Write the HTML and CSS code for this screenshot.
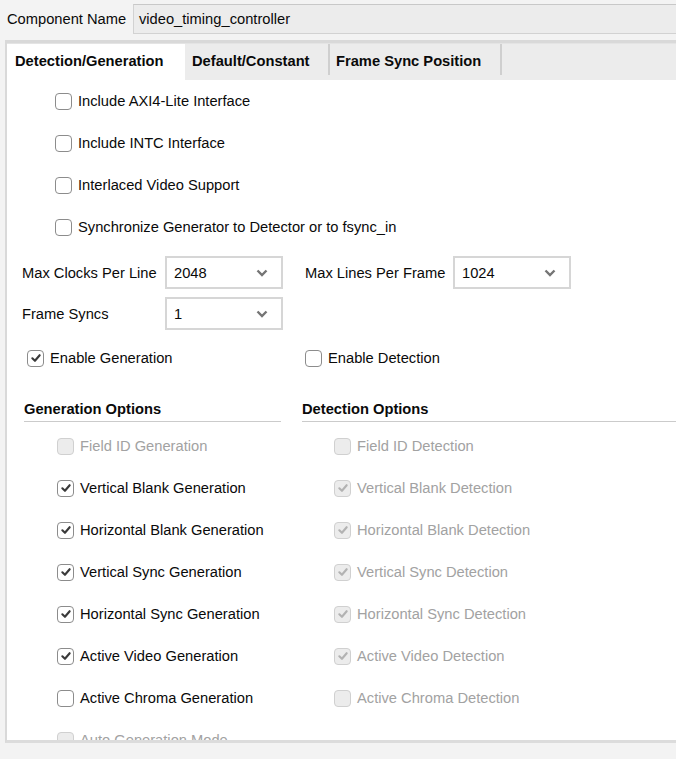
FILE: index.html
```html
<!DOCTYPE html>
<html>
<head>
<meta charset="utf-8">
<link rel="stylesheet" href="styles.css">
</head>
<body>
<div class="top">
  <span class="top-label">Component Name</span>
  <div class="name-input">video_timing_controller</div>
</div>
<div class="panel">
  <div class="tabs">
    <div class="tab tab1 active">Detection/Generation</div>
    <div class="tab tab2">Default/Constant</div>
    <div class="sep"></div>
    <div class="tab tab3">Frame Sync Position</div>
    <div class="sep"></div>
  </div>
  <div class="body">
    <div class="top-checks">
      <label class="row"><span class="cb"></span>Include AXI4-Lite Interface</label>
      <label class="row"><span class="cb"></span>Include INTC Interface</label>
      <label class="row"><span class="cb"></span>Interlaced Video Support</label>
      <label class="row"><span class="cb"></span>Synchronize Generator to Detector or to fsync_in</label>
    </div>
    <div class="selects">
      <span class="sl-label">Max Clocks Per Line</span>
      <div class="select"><span>2048</span><svg class="chev" width="12" height="8" viewBox="0 0 12 8"><polyline points="1.5,1.5 6,6 10.5,1.5"/></svg></div>
      <span class="sl-label sl-right">Max Lines Per Frame</span>
      <div class="select"><span>1024</span><svg class="chev" width="12" height="8" viewBox="0 0 12 8"><polyline points="1.5,1.5 6,6 10.5,1.5"/></svg></div>
      <span class="sl-label">Frame Syncs</span>
      <div class="select"><span>1</span><svg class="chev" width="12" height="8" viewBox="0 0 12 8"><polyline points="1.5,1.5 6,6 10.5,1.5"/></svg></div>
    </div>
    <div class="enable">
      <label class="row"><span class="cb"><svg viewBox="0 0 16 16"><polyline points="3.8,8.3 6.8,11.2 12.2,4.8"/></svg></span>Enable Generation</label>
      <label class="row"><span class="cb"></span>Enable Detection</label>
    </div>
    <div class="options">
      <div class="col col-gen">
        <div class="heading">Generation Options</div>
        <div class="opts">
          <label class="row dis"><span class="cb"></span>Field ID Generation</label>
          <label class="row"><span class="cb"><svg viewBox="0 0 16 16"><polyline points="3.8,8.3 6.8,11.2 12.2,4.8"/></svg></span>Vertical Blank Generation</label>
          <label class="row"><span class="cb"><svg viewBox="0 0 16 16"><polyline points="3.8,8.3 6.8,11.2 12.2,4.8"/></svg></span>Horizontal Blank Generation</label>
          <label class="row"><span class="cb"><svg viewBox="0 0 16 16"><polyline points="3.8,8.3 6.8,11.2 12.2,4.8"/></svg></span>Vertical Sync Generation</label>
          <label class="row"><span class="cb"><svg viewBox="0 0 16 16"><polyline points="3.8,8.3 6.8,11.2 12.2,4.8"/></svg></span>Horizontal Sync Generation</label>
          <label class="row"><span class="cb"><svg viewBox="0 0 16 16"><polyline points="3.8,8.3 6.8,11.2 12.2,4.8"/></svg></span>Active Video Generation</label>
          <label class="row"><span class="cb"></span>Active Chroma Generation</label>
          <label class="row dis"><span class="cb"></span>Auto Generation Mode</label>
        </div>
      </div>
      <div class="col col-det">
        <div class="heading">Detection Options</div>
        <div class="opts">
          <label class="row dis"><span class="cb"></span>Field ID Detection</label>
          <label class="row dis"><span class="cb"><svg viewBox="0 0 16 16"><polyline points="3.8,8.3 6.8,11.2 12.2,4.8"/></svg></span>Vertical Blank Detection</label>
          <label class="row dis"><span class="cb"><svg viewBox="0 0 16 16"><polyline points="3.8,8.3 6.8,11.2 12.2,4.8"/></svg></span>Horizontal Blank Detection</label>
          <label class="row dis"><span class="cb"><svg viewBox="0 0 16 16"><polyline points="3.8,8.3 6.8,11.2 12.2,4.8"/></svg></span>Vertical Sync Detection</label>
          <label class="row dis"><span class="cb"><svg viewBox="0 0 16 16"><polyline points="3.8,8.3 6.8,11.2 12.2,4.8"/></svg></span>Horizontal Sync Detection</label>
          <label class="row dis"><span class="cb"><svg viewBox="0 0 16 16"><polyline points="3.8,8.3 6.8,11.2 12.2,4.8"/></svg></span>Active Video Detection</label>
          <label class="row dis"><span class="cb"></span>Active Chroma Detection</label>
        </div>
      </div>
    </div>
  </div>
</div>
</body>
</html>
```
FILE: styles.css
```css
html, body {
  margin: 0;
  padding: 0;
}
body {
  width: 676px;
  height: 759px;
  overflow: hidden;
  background: #f3f3f3;
  font-family: "Liberation Sans", Arial, sans-serif;
  font-size: 14.7px;
  color: #0a0a0a;
}
.top {
  display: flex;
  align-items: center;
  height: 30px;
  padding-top: 4px;
  width: 720px;
}
.top-label {
  width: 126px;
  padding-left: 7px;
}
.name-input {
  flex: 1;
  height: 30px;
  box-sizing: border-box;
  border: 1px solid #d2d2d2;
  border-top-color: #c8c8c8;
  background: #ececec;
  padding-left: 5px;
  display: flex;
  align-items: center;
}
.panel {
  margin-top: 6px;
  margin-left: 5px;
  width: 720px;
  height: 703px;
  box-sizing: border-box;
  border-top: 3px solid #d9d9d9;
  border-left: 2px solid #d9d9d9;
  border-bottom: 3px solid #dcdcdc;
  background: #fff;
  overflow: hidden;
}
.tabs {
  display: flex;
  height: 37px;
  background: #ececec;
  border-top: 1px solid #e4e4e4;
  box-sizing: border-box;
}
.tab {
  font-weight: bold;
  display: flex;
  align-items: center;
  box-sizing: border-box;
  padding-bottom: 2px;
}
.tab1 { width: 178px; padding-left: 8px; }
.tab2 { width: 143px; padding-left: 7px; }
.tab3 { width: 170px; padding-left: 6px; }
.tab.active { background: #fff; }
.sep {
  width: 2px;
  background: #cfcfcf;
  margin-bottom: 5px;
}
.body {
  height: 660px;
  overflow: hidden;
}
.row {
  display: flex;
  align-items: center;
  height: 42px;
  white-space: nowrap;
}
.cb {
  width: 17px;
  height: 17px;
  box-sizing: border-box;
  border: 1.5px solid #8c8c8c;
  border-radius: 4px;
  background: #fff;
  margin-right: 6px;
  flex: none;
  display: flex;
  align-items: center;
  justify-content: center;
}
.cb svg {
  width: 14px;
  height: 14px;
}
.cb svg polyline {
  fill: none;
  stroke: #3a3a3a;
  stroke-width: 2.4;
  stroke-linecap: round;
  stroke-linejoin: round;
}
.dis { color: #a2a2a2; }
.dis .cb {
  border-color: #d0d0d0;
  background: #ececec;
}
.dis .cb svg polyline { stroke: #b2b2b2; }
.top-checks {
  padding-left: 48px;
}
.selects {
  margin-top: 8px;
  padding-left: 15px;
  display: grid;
  grid-template-columns: 143px 118px 170px 118px;
  grid-auto-rows: 33px;
  row-gap: 8px;
  align-items: center;
}
.sl-label { white-space: nowrap; }
.sl-right { margin-left: 22px; }
.select {
  height: 33px;
  box-sizing: border-box;
  border: 2px solid #d6d6d6;
  background: #fff;
  display: flex;
  align-items: center;
  justify-content: space-between;
  padding-left: 7px;
  padding-right: 13px;
}
.chev polyline {
  fill: none;
  stroke: #757575;
  stroke-width: 2.4;
}
.enable {
  margin-top: 7px;
  padding-left: 20px;
  display: grid;
  grid-template-columns: 278px auto;
}
.options {
  margin-top: 21px;
  padding-left: 17px;
  display: grid;
  grid-template-columns: 257px 1fr;
  column-gap: 21px;
}
.heading {
  font-weight: bold;
  height: 18px;
  line-height: 18px;
  padding-bottom: 3px;
  border-bottom: 1px solid #cbcbcb;
  margin-bottom: 3px;
}
.col-gen .opts { padding-left: 33px; }
.col-det .opts { padding-left: 32px; }
```
